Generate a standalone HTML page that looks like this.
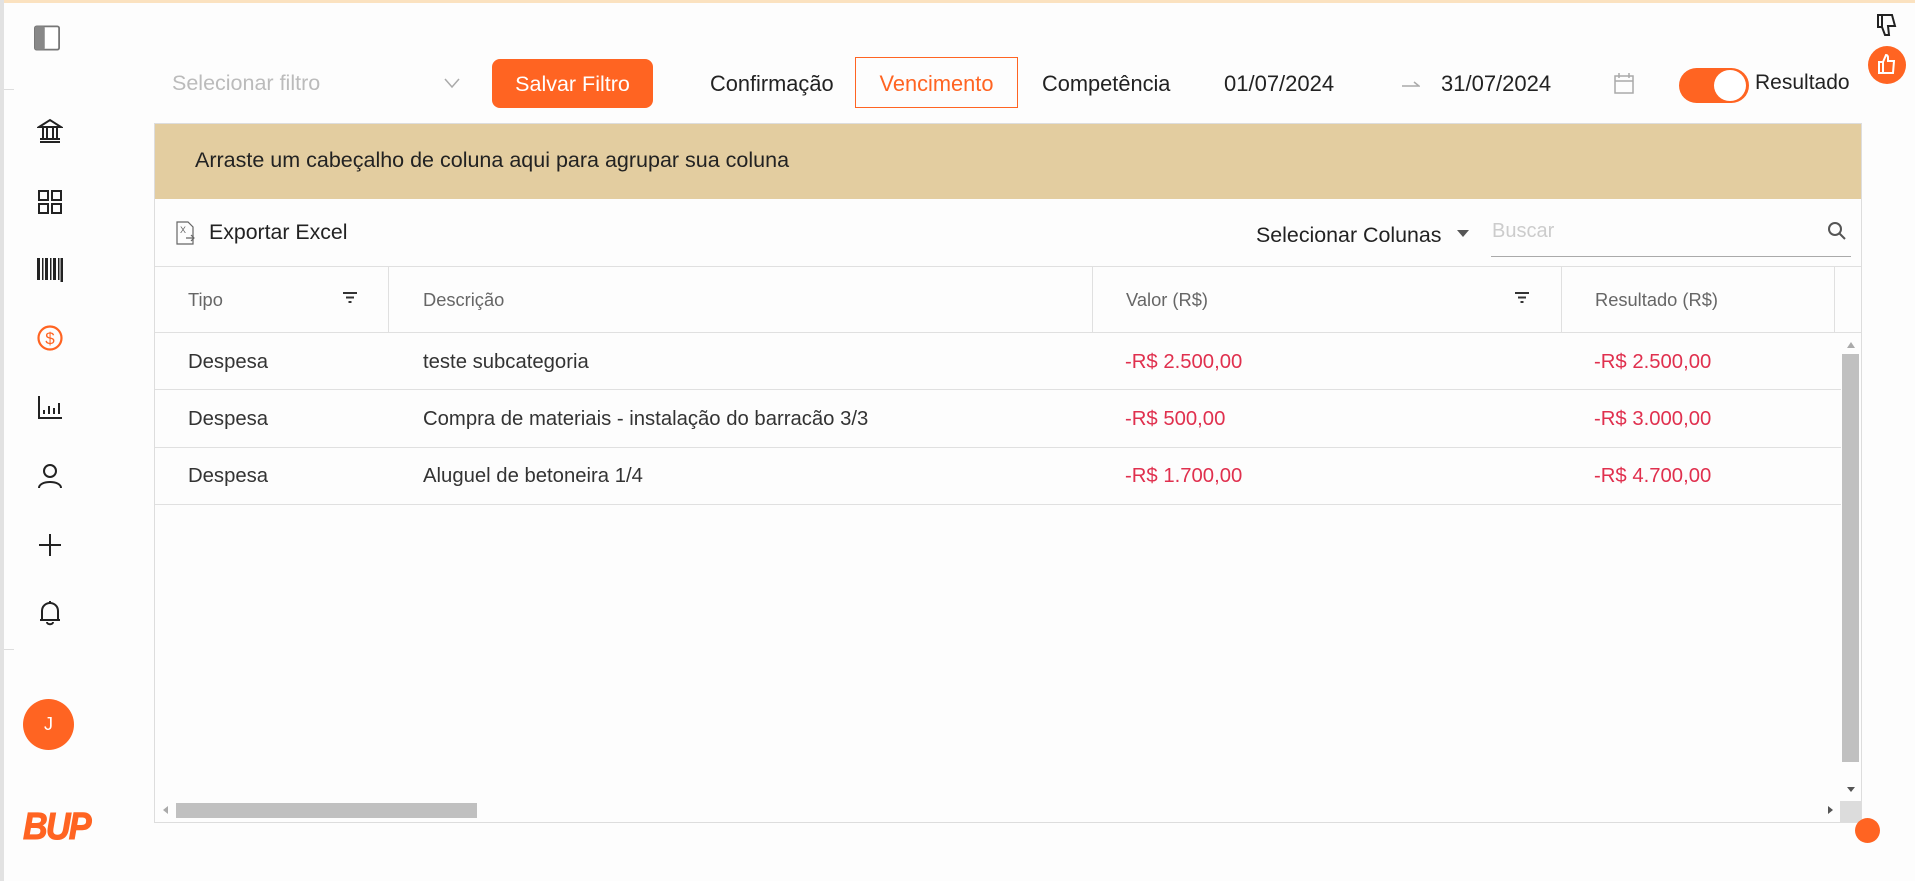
<!DOCTYPE html>
<html><head><meta charset="utf-8">
<style>
*{box-sizing:border-box;margin:0;padding:0}
body{width:1915px;height:881px;overflow:hidden;background:#fdfdfd;font-family:"Liberation Sans",sans-serif;position:relative;color:#222}
.a{position:absolute}
.ic{position:absolute;left:37px;width:26px;height:26px}
.t{white-space:nowrap}
.hd{color:#666;font-size:18.3px}
.cell{font-size:20.3px;color:#333}
.red{color:#e0304e}
.hl{position:absolute;height:1px;background:#e0e0e0}
.vl{position:absolute;width:1px;background:#e0e0e0}
.tb{font-size:21.8px;color:#222}
</style></head><body>
<div class="a" style="left:0;top:0;width:1915px;height:3px;background:#fbe2c0"></div>
<div class="a" style="left:0;top:0;width:4px;height:881px;background:#e2e2e2"></div>
<div class="a" style="left:4px;top:89px;width:10px;height:1px;background:#ddd"></div>
<div class="a" style="left:4px;top:649px;width:10px;height:1px;background:#ddd"></div>

<svg class="ic" style="top:25px;left:34px" width="29" height="28" viewBox="0 0 29 28"><rect x="1" y="1" width="27" height="26" rx="2" fill="#fff" stroke="#777" stroke-width="2"/><rect x="1" y="1" width="11" height="26" rx="2" fill="#888"/></svg>
<svg class="ic" style="top:118px" viewBox="0 0 26 26" fill="none" stroke="#222" stroke-width="2"><path d="M2 9 L13 2 L24 9 Z M3 24 H23 M3 21 H23 M6 10 V20 M10 10 V20 M16 10 V20 M20 10 V20"/></svg>
<svg class="ic" style="top:189px" viewBox="0 0 26 26" fill="none" stroke="#222" stroke-width="2"><rect x="2" y="2" width="9" height="9"/><rect x="15" y="2" width="9" height="9"/><rect x="2" y="15" width="9" height="9"/><rect x="15" y="15" width="9" height="9"/></svg>
<svg class="ic" style="top:257px" viewBox="0 0 26 26" fill="#222"><rect x="0" y="1" width="3" height="22"/><rect x="5" y="1" width="1.5" height="22"/><rect x="8" y="1" width="3" height="22"/><rect x="13" y="1" width="1.5" height="22"/><rect x="16" y="1" width="3" height="22"/><rect x="21" y="1" width="1.5" height="22"/><rect x="23.5" y="1" width="2.5" height="24"/></svg>
<svg class="ic" style="top:325px" viewBox="0 0 26 26"><circle cx="13" cy="13" r="11.5" fill="none" stroke="#ff6422" stroke-width="2.2"/><text x="13" y="19" font-size="17" text-anchor="middle" fill="#ff6422" font-family="Liberation Sans">$</text></svg>
<svg class="ic" style="top:394px" viewBox="0 0 26 26" fill="none" stroke="#222" stroke-width="2"><path d="M2 2 V24 H25 M7 20 V16 M12 20 V12 M17 20 V14 M22 20 V9"/></svg>
<svg class="ic" style="top:463px" viewBox="0 0 26 26" fill="none" stroke="#222" stroke-width="2"><circle cx="13" cy="8" r="6"/><path d="M2 25 C2 17 24 17 24 25"/></svg>
<svg class="ic" style="top:532px" viewBox="0 0 26 26" fill="none" stroke="#222" stroke-width="2"><path d="M13 2 V24 M2 13 H24"/></svg>
<svg class="ic" style="top:600px" viewBox="0 0 26 26" fill="none" stroke="#222" stroke-width="2"><path d="M13 1 V3 M5 20 V11 C5 6 9 3 13 3 C17 3 21 6 21 11 V20 Z M3 20 H23 M10 22 C10 25 16 25 16 22"/></svg>
<div class="a" style="left:23px;top:699px;width:51px;height:51px;border-radius:50%;background:#ff6422;color:#fff;font-size:18px;text-align:center;line-height:51px">J</div>
<div class="a t" style="left:23px;top:806px;font-size:38px;font-weight:900;font-style:italic;color:#ff6422;letter-spacing:-2px;transform:scaleX(0.9);transform-origin:left;-webkit-text-stroke:1px #ff6422">BUP</div>

<div class="a t" style="left:172px;top:71px;font-size:21.5px;color:#bbb">Selecionar filtro</div>
<svg class="a" style="left:444px;top:77px" width="16" height="12" viewBox="0 0 16 12" fill="none" stroke="#aaa" stroke-width="1.5"><path d="M1 2 L8 10 L15 2"/></svg>
<div class="a" style="left:492px;top:59px;width:161px;height:49px;background:#ff6422;border-radius:8px;color:#fff;font-size:21.5px;text-align:center;line-height:51px">Salvar Filtro</div>
<div class="a t tb" style="left:710px;top:71px">Confirmação</div>
<div class="a" style="left:855px;top:57px;width:163px;height:51px;border:1.5px solid #ff6422;color:#ff6422;font-size:21.8px;text-align:center;line-height:51px">Vencimento</div>
<div class="a t tb" style="left:1042px;top:71px">Competência</div>
<div class="a t tb" style="left:1224px;top:71px;font-size:22px">01/07/2024</div>
<svg class="a" style="left:1402px;top:78px" width="18" height="10" viewBox="0 0 18 10" fill="none" stroke="#aaa" stroke-width="1.5"><path d="M0 8 H17 L12 4"/></svg>
<div class="a t tb" style="left:1441px;top:71px;font-size:22px">31/07/2024</div>
<svg class="a" style="left:1614px;top:73px" width="20" height="21" viewBox="0 0 20 21" fill="none" stroke="#aaa" stroke-width="1.5"><rect x="1" y="3" width="18" height="17"/><path d="M1 8 H19 M5 0 V5 M15 0 V5"/></svg>
<div class="a" style="left:1679px;top:68px;width:70px;height:35px;border-radius:18px;background:#ff6422"></div>
<div class="a" style="left:1714px;top:70px;width:32px;height:31px;border-radius:50%;background:#fff"></div>
<div class="a t tb" style="left:1755px;top:71px;font-size:21px">Resultado</div>
<svg class="a" style="left:1876px;top:13px" width="22" height="24" viewBox="0 0 22 24" fill="none" stroke="#222" stroke-width="2"><path d="M2 2 H16 L19 13 H12 L13 22 L9 22 L6 14 H2 Z M6 2 V14"/></svg>
<div class="a" style="left:1868px;top:46px;width:38px;height:38px;border-radius:50%;background:#ff6422"></div>
<svg class="a" style="left:1877px;top:53px" width="20" height="22" viewBox="0 0 20 22" fill="none" stroke="#fff" stroke-width="2"><path d="M2 9 H6 V20 H2 Z M6 9 L9 2 C11 2 11 4 11 5 V8 H17 L16 20 H6"/></svg>

<div class="a" style="left:154px;top:123px;width:1708px;height:700px;border:1px solid #ddd;background:#fdfdfd"></div>
<div class="a" style="left:155px;top:124px;width:1706px;height:75px;background:#e3cda0"></div>
<div class="a t" style="left:195px;top:148px;font-size:21.5px;color:#222">Arraste um cabeçalho de coluna aqui para agrupar sua coluna</div>
<svg class="a" style="left:176px;top:221px" width="20" height="24" viewBox="0 0 20 24" fill="none" stroke="#666" stroke-width="1.2"><path d="M1 1 H12 L17 6 V23 H1 Z"/><text x="4" y="12" font-size="9" fill="#666" stroke="none" font-family="Liberation Sans">X</text><path d="M10 17 H18 M15 14 L18 17 L15 20"/></svg>
<div class="a t" style="left:209px;top:220px;font-size:21.3px;color:#222">Exportar Excel</div>
<div class="a t" style="left:1256px;top:223px;font-size:21.4px;color:#222">Selecionar Colunas</div>
<svg class="a" style="left:1457px;top:230px" width="12" height="8" viewBox="0 0 12 8"><path d="M0 0 H12 L6 7 Z" fill="#555"/></svg>
<div class="a t" style="left:1492px;top:220px;font-size:20px;color:#ccc">Buscar</div>
<div class="a" style="left:1491px;top:256px;width:360px;height:1px;background:#aaa"></div>
<svg class="a" style="left:1827px;top:221px" width="20" height="20" viewBox="0 0 20 20" fill="none" stroke="#555" stroke-width="2"><circle cx="8" cy="8" r="6"/><path d="M12.5 12.5 L18 18"/></svg>

<div class="hl" style="left:155px;top:266px;width:1706px"></div>
<div class="vl" style="left:388px;top:266px;height:66px"></div>
<div class="vl" style="left:1092px;top:266px;height:66px"></div>
<div class="vl" style="left:1561px;top:266px;height:66px"></div>
<div class="vl" style="left:1834px;top:266px;height:66px"></div>
<div class="a t hd" style="left:188px;top:289px">Tipo</div>
<div class="a t hd" style="left:423px;top:289px">Descrição</div>
<div class="a t hd" style="left:1126px;top:289px">Valor (R$)</div>
<div class="a t hd" style="left:1595px;top:289px">Resultado (R$)</div>
<svg class="a" style="left:343px;top:292px" width="14" height="12" viewBox="0 0 14 12" fill="#333"><rect x="0" y="0" width="14" height="2"/><rect x="3" y="4.5" width="8" height="2"/><rect x="5.5" y="9" width="3" height="2"/></svg>
<svg class="a" style="left:1515px;top:292px" width="14" height="12" viewBox="0 0 14 12" fill="#333"><rect x="0" y="0" width="14" height="2"/><rect x="3" y="4.5" width="8" height="2"/><rect x="5.5" y="9" width="3" height="2"/></svg>
<div class="hl" style="left:155px;top:332px;width:1706px"></div>

<div class="a t cell" style="left:188px;top:351px">Despesa</div>
<div class="a t cell" style="left:423px;top:351px">teste subcategoria</div>
<div class="a t cell red" style="left:1125px;top:351px">-R$ 2.500,00</div>
<div class="a t cell red" style="left:1594px;top:351px">-R$ 2.500,00</div>
<div class="hl" style="left:155px;top:389px;width:1686px"></div>
<div class="a t cell" style="left:188px;top:408px">Despesa</div>
<div class="a t cell" style="left:423px;top:408px">Compra de materiais - instalação do barracão 3/3</div>
<div class="a t cell red" style="left:1125px;top:408px">-R$ 500,00</div>
<div class="a t cell red" style="left:1594px;top:408px">-R$ 3.000,00</div>
<div class="hl" style="left:155px;top:447px;width:1686px"></div>
<div class="a t cell" style="left:188px;top:465px">Despesa</div>
<div class="a t cell" style="left:423px;top:465px">Aluguel de betoneira 1/4</div>
<div class="a t cell red" style="left:1125px;top:465px">-R$ 1.700,00</div>
<div class="a t cell red" style="left:1594px;top:465px">-R$ 4.700,00</div>
<div class="hl" style="left:155px;top:504px;width:1686px"></div>

<svg class="a" style="left:1846px;top:341px" width="10" height="8" viewBox="0 0 10 8"><path d="M1 7 L5 1 L9 7 Z" fill="#aaa"/></svg>
<div class="a" style="left:1842px;top:354px;width:17px;height:408px;background:#c0c0c0"></div>
<svg class="a" style="left:1846px;top:786px" width="10" height="8" viewBox="0 0 10 8"><path d="M1 1 L5 6 L9 1 Z" fill="#555"/></svg>
<svg class="a" style="left:162px;top:805px" width="8" height="10" viewBox="0 0 8 10"><path d="M6 1 L1 5 L6 9 Z" fill="#aaa"/></svg>
<div class="a" style="left:176px;top:803px;width:301px;height:15px;background:#c0c0c0"></div>
<svg class="a" style="left:1827px;top:805px" width="8" height="10" viewBox="0 0 8 10"><path d="M1 1 L6 5 L1 9 Z" fill="#555"/></svg>
<div class="a" style="left:1840px;top:801px;width:21px;height:21px;background:#dcdcdc"></div>
<div class="a" style="left:1855px;top:818px;width:25px;height:25px;border-radius:50%;background:#ff6422"></div>
</body></html>
